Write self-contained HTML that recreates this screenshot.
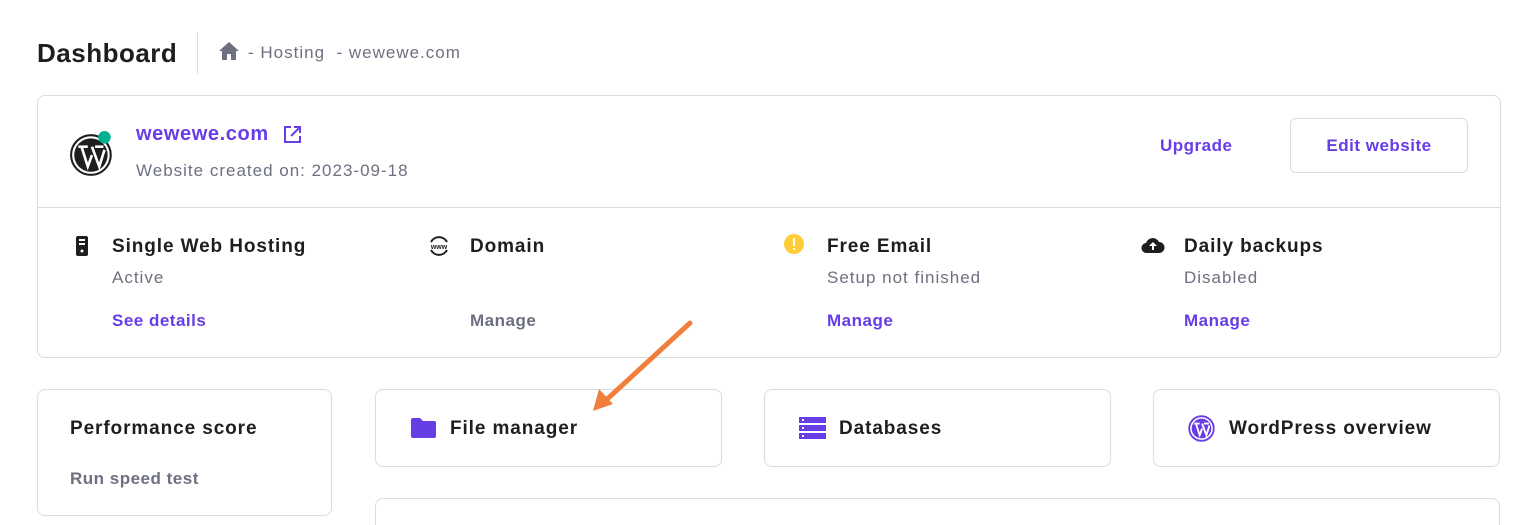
<!DOCTYPE html>
<html><head><meta charset="utf-8"><style>
*{margin:0;padding:0;box-sizing:border-box}
html,body{width:1536px;height:525px;overflow:hidden}
body{background:#fff;font-family:"Liberation Sans",sans-serif;color:#1d1e20;position:relative}
.a{position:absolute;white-space:nowrap}
.card{position:absolute;border:1px solid #dadce0;border-radius:8px;background:#fff}
.t{font-size:19px;font-weight:bold;color:#1d1e20;letter-spacing:0.9px}
.s{font-size:17px;color:#6d7081;letter-spacing:1px}
.l{font-size:17px;font-weight:bold;color:#673de6;letter-spacing:0.5px}
.g{font-size:17px;font-weight:bold;color:#6d7081;letter-spacing:0.5px}
</style></head><body>
<div class="a" style="left:37px;top:38px;font-size:26px;font-weight:bold;letter-spacing:0.5px">Dashboard</div>
<div class="a" style="left:197px;top:32px;width:1px;height:42px;background:#dadce0"></div>
<svg class="a" style="left:219px;top:42px" width="20" height="18" viewBox="0 0 20 18"><path d="M10 0L0 9h3v9h5v-6h4v6h5V9h3z" fill="#6d7081"/></svg>
<div class="a s" style="left:248px;top:43px">- Hosting&nbsp; - wewewe.com</div>

<div class="card" style="left:37px;top:95px;width:1464px;height:263px"></div>
<div class="a" style="left:38px;top:207px;width:1462px;height:1px;background:#dadce0"></div>
<svg class="a" style="left:70px;top:130px" width="46" height="48" viewBox="0 0 44 46"><circle cx="20" cy="24" r="19" fill="#fff" stroke="#1d1e20" stroke-width="2"/><circle cx="20" cy="24" r="16" fill="#1d1e20"/><path d="M8 16h9M24 16h8M11 16l6 19 4-11M21 16l7 19 5-16" stroke="#fff" stroke-width="2.5" fill="none"/><circle cx="33" cy="7" r="6" fill="#00b090"/></svg>
<div class="a" style="left:136px;top:123px;font-size:20px;font-weight:bold;color:#673de6;letter-spacing:0.6px">wewewe.com</div>
<svg class="a" style="left:283px;top:125px" width="19" height="19" viewBox="0 0 19 19"><path d="M8 2H2v15h15v-6M11 2h6v6M17 2L8 11" stroke="#673de6" stroke-width="2" fill="none"/></svg>
<div class="a s" style="left:136px;top:161px">Website created on: 2023-09-18</div>
<div class="a l" style="left:1160px;top:136px">Upgrade</div>
<div class="a" style="left:1290px;top:118px;width:178px;height:55px;border:1px solid #dadce0;border-radius:6px"></div>
<div class="a l" style="left:1290px;top:136px;width:178px;text-align:center">Edit website</div>

<svg class="a" style="left:74px;top:235px" width="16" height="22" viewBox="0 0 16 22"><rect x="2" y="1" width="12" height="20" rx="2" fill="#1d1e20"/><rect x="5" y="4" width="6" height="2" fill="#fff"/><rect x="5" y="8" width="6" height="2" fill="#fff"/><circle cx="8" cy="16" r="1.5" fill="#fff"/></svg>
<div class="a t" style="left:112px;top:236px">Single Web Hosting</div>
<div class="a s" style="left:112px;top:268px">Active</div>
<div class="a l" style="left:112px;top:311px">See details</div>

<svg class="a" style="left:428px;top:235px" width="22" height="22" viewBox="0 0 22 22"><path d="M3 7a9 9 0 0 1 16 0M3 15a9 9 0 0 0 16 0" stroke="#1d1e20" stroke-width="2" fill="none"/><text x="11" y="14" font-size="7" font-weight="bold" text-anchor="middle" font-family="Liberation Sans" fill="#1d1e20">www</text></svg>
<div class="a t" style="left:470px;top:236px">Domain</div>
<div class="a g" style="left:470px;top:311px">Manage</div>

<svg class="a" style="left:784px;top:234px" width="20" height="20" viewBox="0 0 20 20"><circle cx="10" cy="10" r="10" fill="#ffcd35"/><rect x="9" y="4" width="2" height="8" fill="#fff"/><rect x="9" y="14" width="2" height="2" fill="#fff"/></svg>
<div class="a t" style="left:827px;top:236px">Free Email</div>
<div class="a s" style="left:827px;top:268px">Setup not finished</div>
<div class="a l" style="left:827px;top:311px">Manage</div>

<svg class="a" style="left:1141px;top:236px" width="24" height="18" viewBox="0 0 24 18"><path d="M6 17a5 5 0 0 1-1-10A7 7 0 0 1 18 6a5 5 0 0 1 0 11z" fill="#1d1e20"/><path d="M12 6l-4 4h3v4h2v-4h3z" fill="#fff"/></svg>
<div class="a t" style="left:1184px;top:236px">Daily backups</div>
<div class="a s" style="left:1184px;top:268px">Disabled</div>
<div class="a l" style="left:1184px;top:311px">Manage</div>

<div class="card" style="left:37px;top:389px;width:295px;height:127px"></div>
<div class="a t" style="left:70px;top:418px">Performance score</div>
<div class="a g" style="left:70px;top:469px">Run speed test</div>

<div class="card" style="left:375px;top:389px;width:347px;height:78px"></div>
<svg class="a" style="left:410px;top:417px" width="27" height="22" viewBox="0 0 27 22"><path d="M1 3a2 2 0 0 1 2-2h7l3 3h11a2 2 0 0 1 2 2v13a2 2 0 0 1-2 2H3a2 2 0 0 1-2-2z" fill="#673de6"/></svg>
<div class="a t" style="left:450px;top:418px">File manager</div>

<div class="card" style="left:764px;top:389px;width:347px;height:78px"></div>
<svg class="a" style="left:799px;top:417px" width="27" height="22" viewBox="0 0 27 22"><rect x="0" y="0" width="27" height="6" fill="#673de6"/><rect x="0" y="8" width="27" height="6" fill="#673de6"/><rect x="0" y="16" width="27" height="6" fill="#673de6"/><rect x="3" y="2" width="2" height="2" fill="#fff"/><rect x="3" y="10" width="2" height="2" fill="#fff"/><rect x="3" y="18" width="2" height="2" fill="#fff"/></svg>
<div class="a t" style="left:839px;top:418px">Databases</div>

<div class="card" style="left:1153px;top:389px;width:347px;height:78px"></div>
<svg class="a" style="left:1188px;top:415px" width="27" height="27" viewBox="0 0 44 44"><circle cx="22" cy="22" r="20" fill="#fff" stroke="#673de6" stroke-width="3"/><circle cx="22" cy="22" r="16" fill="#673de6"/><path d="M10 14h9M26 14h8M13 14l6 19 4-11M23 14l7 19 5-16" stroke="#fff" stroke-width="3" fill="none"/></svg>
<div class="a t" style="left:1229px;top:418px">WordPress overview</div>

<div class="card" style="left:375px;top:498px;width:1125px;height:27px;border-bottom:none;border-radius:8px 8px 0 0"></div>

<svg class="a" style="left:585px;top:315px" width="115" height="105" viewBox="585 315 115 105"><line x1="690" y1="323" x2="604" y2="402" stroke="#f07f3c" stroke-width="5" stroke-linecap="round"/><path d="M593 411l6-22 14 15z" fill="#f07f3c"/></svg>
</body></html>
